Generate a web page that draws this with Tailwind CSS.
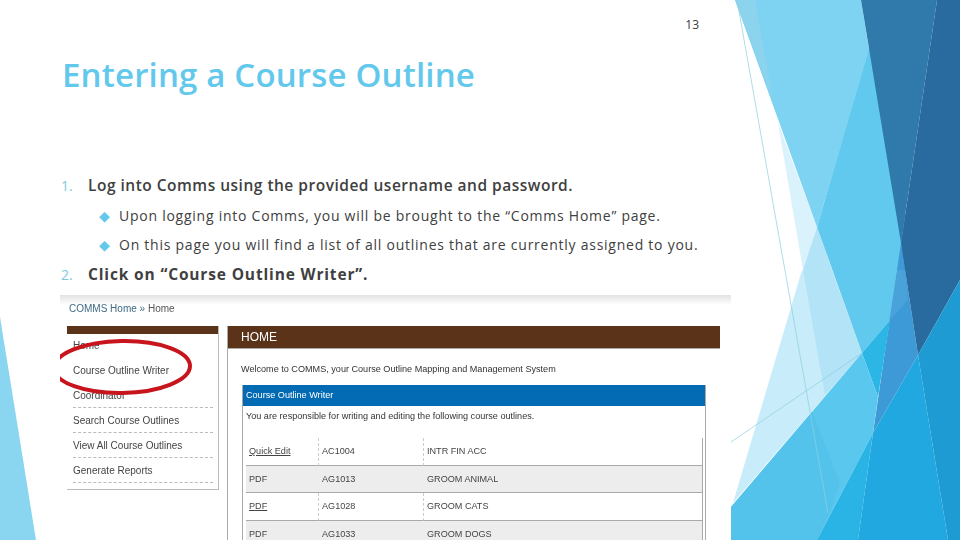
<!DOCTYPE html>
<html>
<head>
<meta charset="utf-8">
<script src="https://cdn.jsdelivr.net/npm/@tailwindcss/browser@4"></script>
</head>
<body class="m-0">
<div class="relative w-[960px] h-[540px] overflow-hidden bg-white font-['Open_Sans',sans-serif] text-[#404040]">
  <svg class="absolute inset-0" width="960" height="540" viewBox="0 0 960 540">
    <polygon points="0,317 36,540 0,540" fill="#8ad6f1"/>
    <polygon points="778,123 817,227 803,270" fill="#d9f2fb"/>
    <polygon points="802,270 733,503 862,353" fill="#c8ecfa"/>
    <polygon points="817,227 832,270 862,353 825,395 803,270" fill="#b2e3f7"/>
    <polygon points="868,50 880,0 912,270 897,270 890,320 862,353 817,227" fill="#62c9ee"/>
    <polygon points="735,0 861,0 869,50 817,227" fill="#7dd3f1"/>
    <polygon points="735,0 755,0 773,100" fill="#8cd4ee"/>
    <polygon points="861,0 937,0 901,243" fill="#2f7aab"/>
    <polygon points="897,270 901,243 905,270 918,355 873,433 890,317" fill="#3d9ad6"/>
    <polygon points="897,270 905,270 908,300 890,320" fill="#4aa2da"/>
    <polygon points="937,0 960,0 960,280 918,355 905,270 901,243" fill="#296b9e"/>
    <polygon points="890,320 878,397 862,353" fill="#2bb6e6"/>
    <polygon points="731,507 862,353 878,397 873,433 817,540 731,540" fill="#5ac7ee"/>
    <polygon points="731,507 812,412 840,483 830,513 817,540 731,540" fill="#54c3ec"/>
    <polygon points="817,540 858,540 873,433" fill="#2ab4e6"/>
    <polygon points="858,540 873,433 918,355 948,540" fill="#21a8e0"/>
    <polygon points="918,355 960,280 960,540 948,540" fill="#1e9bd3"/>
    <line x1="737" y1="0" x2="828" y2="513" stroke="#8ccfe0" stroke-width="0.7"/>
    <line x1="731" y1="442" x2="862" y2="353" stroke="#8ccfe0" stroke-width="0.7"/>
  </svg>

  <div class="relative flex flex-col h-full pl-[60px]">
    <div class="h-[18px] mt-[16px] w-[639px] text-right text-[12px] leading-[18px]">13</div>
    <h1 class="mt-[18px] pl-[2px] h-[46px] text-[33px] leading-[46px] font-semibold tracking-[0.17px] text-[#62c8ec]">Entering a Course Outline</h1>
    <ol class="mt-[72px] flex flex-col text-[15.5px]">
      <li class="flex items-baseline h-[31px] leading-[24px] pt-[3px] font-semibold tracking-[0.5px]"><span class="w-[28px] pl-[1px] font-normal text-[14px] tracking-normal text-[#7ccbd9]">1.</span>Log into Comms using the provided username and password.</li>
      <li class="flex items-center h-[29px] ml-[39px] text-[14px] tracking-[0.75px]"><span class="w-[20px] text-[#62c8ec] text-[14px] tracking-normal">◆</span>Upon logging into Comms, you will be brought to the “Comms Home” page.</li>
      <li class="flex items-center h-[29px] ml-[39px] text-[14px] tracking-[0.75px]"><span class="w-[20px] text-[#62c8ec] text-[14px] tracking-normal">◆</span>On this page you will find a list of all outlines that are currently assigned to you.</li>
      <li class="flex items-baseline h-[31px] leading-[24px] pt-[3px] font-bold tracking-[0.85px]"><span class="w-[28px] pl-[1px] font-normal text-[14px] tracking-normal text-[#7ccbd9]">2.</span>Click on “Course Outline Writer”.</li>
    </ol>
    <div class="mt-[5px] w-[671px] flex-1 bg-white overflow-hidden font-['Liberation_Sans',sans-serif] text-[9.1px] text-[#444] blur-[0.3px]">
      <div class="h-[10px] bg-gradient-to-b from-[#e2e2e2] to-white"></div>
      <div class="h-[21px] pl-[9px] leading-[7px] text-[10px] text-[#3f6a85]">COMMS Home » <span class="text-[#555]">Home</span></div>
      <div class="flex items-start pl-[7px] gap-[8px]">
        <div class="relative w-[152px] h-[164px] border-r border-b border-[#bbb]">
          <div class="h-[8px] bg-[#5a3318]"></div>
          <ul class="pl-[6px] pr-[5px] text-[10px]">
            <li class="h-[24px] leading-[22px] pt-[1px]">Home</li>
            <li class="h-[25px] leading-[25px]">Course Outline Writer</li>
            <li class="h-[25px] leading-[25px] border-b border-dashed border-[#bbb]">Coordinator</li>
            <li class="h-[25px] leading-[25px] border-b border-dashed border-[#bbb]">Search Course Outlines</li>
            <li class="h-[25px] leading-[25px] border-b border-dashed border-[#bbb]">View All Course Outlines</li>
            <li class="h-[25px] leading-[25px] border-b border-dashed border-[#bbb]">Generate Reports</li>
          </ul>
          <svg class="absolute left-[-17px] top-[12px]" width="146" height="60" viewBox="0 0 146 60"><ellipse cx="72" cy="29" rx="68" ry="26" fill="none" stroke="#c8141c" stroke-width="4" transform="rotate(-1 72 29)"/></svg>
        </div>
        <div class="w-[493px] h-[214px] border-l border-[#aaa]">
          <div class="h-[23px] pl-[13px] bg-[#5a3318] text-white text-[12px] leading-[23px] border-b border-[#aaa]">HOME</div>
          <div class="h-[36px] pl-[13px] leading-[40px] text-[#333]">Welcome to COMMS, your Course Outline Mapping and Management System</div>
          <div class="ml-[14px] w-[464px] h-[155px] border-x border-[#aaa]">
            <div class="h-[21px] pl-[3px] bg-[#036ab4] text-white leading-[21px]">Course Outline Writer</div>
            <div class="h-[32px] pl-[3px] leading-[20px] text-[#333]">You are responsible for writing and editing the following course outlines.</div>
            <div class="ml-[3px] w-[457px] grid grid-cols-[72px_105px_1fr] border-r border-[#aaa] auto-rows-[27.5px] leading-[27px]">
              <div class="pl-[3px] underline border-b border-[#aaa]">Quick Edit</div><div class="pl-[3px] border-b border-[#aaa] border-l border-l-[#ccc] [border-left-style:dashed]">AC1004</div><div class="pl-[3px] border-b border-[#aaa] border-l border-l-[#ccc] [border-left-style:dashed]">INTR FIN ACC</div>
              <div class="pl-[3px] bg-[#ededed] border-b border-[#aaa]">PDF</div><div class="pl-[4px] bg-[#ededed] border-b border-[#aaa]">AG1013</div><div class="pl-[4px] bg-[#ededed] border-b border-[#aaa]">GROOM ANIMAL</div>
              <div class="pl-[3px] underline border-b border-[#aaa]">PDF</div><div class="pl-[3px] border-b border-[#aaa] border-l border-l-[#ccc] [border-left-style:dashed]">AG1028</div><div class="pl-[3px] border-b border-[#aaa] border-l border-l-[#ccc] [border-left-style:dashed]">GROOM CATS</div>
              <div class="pl-[3px] bg-[#ededed]">PDF</div><div class="pl-[4px] bg-[#ededed]">AG1033</div><div class="pl-[4px] bg-[#ededed]">GROOM DOGS</div>
            </div>
          </div>
        </div>
      </div>
    </div>
  </div>
</div>
</body>
</html>
